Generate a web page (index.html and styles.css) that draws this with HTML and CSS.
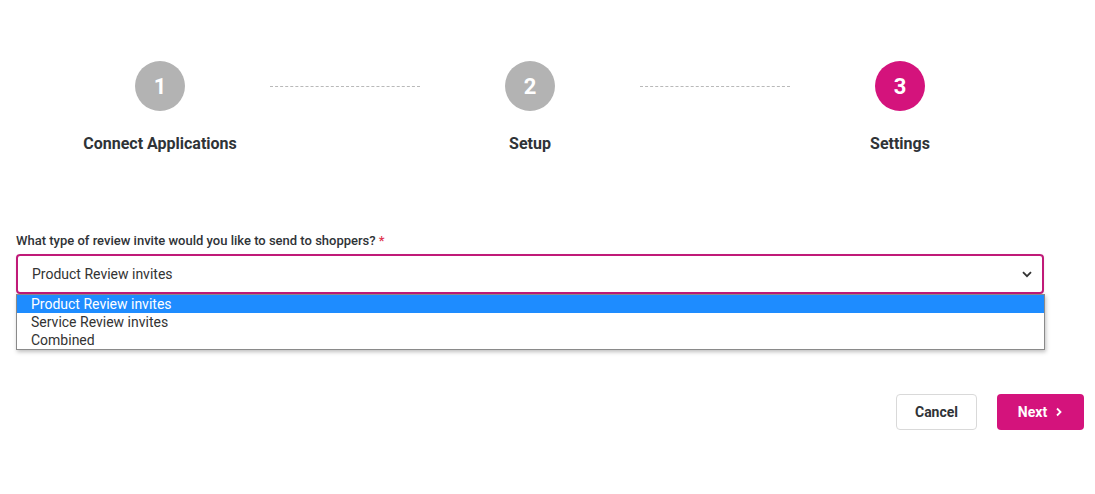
FILE: index.html
```html
<!DOCTYPE html>
<html>
<head>
<meta charset="utf-8">
<link rel="stylesheet" href="styles.css">
</head>
<body>
<div class="page">
  <div class="stepper">
    <div class="step">
      <div class="circle done">1</div>
      <div class="step-label">Connect Applications</div>
    </div>
    <div class="connector"></div>
    <div class="step">
      <div class="circle done">2</div>
      <div class="step-label">Setup</div>
    </div>
    <div class="connector"></div>
    <div class="step">
      <div class="circle active">3</div>
      <div class="step-label">Settings</div>
    </div>
  </div>

  <div class="field">
    <label class="field-label">What type of review invite would you like to send to shoppers? <span class="req">*</span></label>
    <div class="select-wrap">
      <div class="select">
        <span>Product Review invites</span>
        <svg class="chev" width="10" height="7" viewBox="0 0 10 7"><path d="M1 1.2 L5 5.2 L9 1.2" fill="none" stroke="#333" stroke-width="1.8"/></svg>
      </div>
      <ul class="options">
        <li class="opt selected">Product Review invites</li>
        <li class="opt">Service Review invites</li>
        <li class="opt">Combined</li>
      </ul>
    </div>
  </div>

  <div class="actions">
    <button class="btn cancel">Cancel</button>
    <button class="btn next">Next <svg width="8" height="10" viewBox="0 0 8 10"><path d="M2 1.5 L5.5 5 L2 8.5" fill="none" stroke="#fff" stroke-width="1.8"/></svg></button>
  </div>
</div>
</body>
</html>
```

FILE: styles.css
```css
* { box-sizing: border-box; }
html, body { margin: 0; padding: 0; background: #fff; }
body { font-family: Roboto, "Liberation Sans", sans-serif; color: #2f3337; }
.page { padding-top: 61px; }
.stepper { display: flex; padding-left: 50px; }
.step { width: 220px; display: flex; flex-direction: column; align-items: center; }
.circle {
  width: 50px; height: 50px; border-radius: 50%;
  display: flex; align-items: center; justify-content: center;
  color: #fff; font-weight: 700; font-size: 22px;
}
.circle.done { background: #b3b3b3; }
.circle.active { background: #d4137c; }
.step-label { margin-top: 23px; font-size: 16px; font-weight: 700; color: #2f3337; line-height: 20px; }
.connector { width: 150px; height: 0; border-top: 1px dashed #b9b9b9; margin-top: 25px; }

.field { margin-top: 79px; padding: 0 51px 0 16px; }
.field-label { display: block; font-size: 13px; font-weight: 500; color: #2f3337; line-height: 16px; margin-bottom: 5px; }
.req { color: #e0344f; }
.select-wrap { position: relative; }
.select {
  height: 40px; border: 2px solid #c01a78; border-radius: 4px;
  display: flex; align-items: center; justify-content: space-between;
  padding: 0 10px 0 14px; font-size: 14px; color: #333;
  box-shadow: 0 1px 3px rgba(0,0,0,0.08);
}
.chev { margin-top: 1px; }
.options {
  position: absolute; left: 0; right: -1px; top: 40px;
  margin: 0; padding: 0; list-style: none;
  background: #fff; border: 1px solid #8a8a8a;
  box-shadow: 1px 2px 4px rgba(0,0,0,0.25);
}
.opt { height: 18px; line-height: 18px; font-size: 14px; padding-left: 14px; color: #333; }
.opt.selected { background: #1e8cff; color: #fff; }

.actions { display: flex; justify-content: flex-end; gap: 20px; margin-top: 100px; padding-right: 11px; }
.btn {
  height: 36px; border-radius: 4px; font-family: Roboto, "Liberation Sans", sans-serif;
  font-size: 14px; font-weight: 700; cursor: pointer;
}
.cancel { width: 81px; background: #fff; border: 1px solid #d9d9d9; color: #2f3337; }
.next { width: 87px; background: #d4137c; border: none; color: #fff; display: flex; align-items: center; justify-content: center; gap: 8px; }
```
